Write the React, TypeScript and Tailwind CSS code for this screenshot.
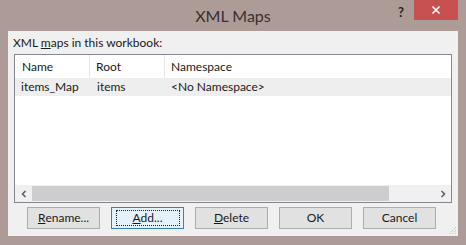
import React from 'react';

const font = { fontFamily: 'Lato, "Noto Sans", Arial, sans-serif' };

function Btn({ children, focused = false }: { children: React.ReactNode; focused?: boolean }) {
  return (
    <div
      className={`flex h-[22px] w-[73px] items-center justify-center border bg-[#e1e1e1] text-[12px] text-[#1a1a1a] ${
        focused ? 'border-[#3c7fb1] bg-[#e5f1fb]' : 'border-[#adadad]'
      }`}
    >
      <div
        className={`flex h-[16px] w-[64px] items-center justify-center ${
          focused ? 'border border-dotted border-[#222]' : ''
        }`}
      >
        {children}
      </div>
    </div>
  );
}

export default function App() {
  return (
    <div className="flex h-[245px] w-[466px] flex-col bg-[#ad9b97]" style={font}>
      {/* title bar */}
      <div className="relative flex h-[31px] items-center justify-center">
        <span className="text-[16px] text-[#3a3030]">XML Maps</span>
        <span className="absolute left-[398px] top-[3px] text-[13px] font-bold text-[#2b2222]">?</span>
        <div className="absolute left-[414px] top-0 flex h-[20px] w-[44px] items-center justify-center bg-[#c75050]">
          <svg width="10" height="10" viewBox="0 0 10 10">
            <path d="M1.5 1.5 L8.5 8.5 M8.5 1.5 L1.5 8.5" stroke="#fff" strokeWidth="1.6" />
          </svg>
        </div>
      </div>

      {/* client */}
      <div className="relative mx-[8px] flex h-[205px] flex-col bg-[#f0f0f0]">
        <div className="h-[23px] pl-[5px] pt-[4px] text-[12px] leading-[16px] text-[#1a1a1a]">
          XML <span className="underline">m</span>aps in this workbook:
        </div>

        {/* list */}
        <div className="ml-[6px] flex h-[149px] w-[438px] flex-col border border-[#828790] bg-white text-[12px] text-[#1a1a1a]">
          <div className="flex h-[23px] items-center">
            <div className="flex h-full w-[75px] items-center border-r border-[#e5e5e5] pl-[7px]">Name</div>
            <div className="flex h-full w-[75px] items-center border-r border-[#e5e5e5] pl-[6px]">Root</div>
            <div className="flex h-full flex-1 items-center pl-[6px]">Namespace</div>
          </div>
          <div className="flex h-[18px] items-center bg-[#eeeeee]">
            <div className="w-[75px] pl-[6px]">items_Map</div>
            <div className="w-[75px] pl-[7px]">items</div>
            <div className="flex-1 pl-[6px]">&lt;No Namespace&gt;</div>
          </div>
          <div className="flex-1" />
          {/* horizontal scrollbar */}
          <div className="flex h-[17px] bg-[#f0f0f0]">
            <div className="flex w-[17px] items-center justify-center">
              <svg width="8" height="8" viewBox="0 0 8 8">
                <path d="M5.5 1 L2.5 4 L5.5 7" stroke="#606060" strokeWidth="1.6" fill="none" />
              </svg>
            </div>
            <div className="my-[1px] w-[357px] bg-[#cdcdcd]" />
            <div className="flex-1" />
            <div className="flex w-[17px] items-center justify-center">
              <svg width="8" height="8" viewBox="0 0 8 8">
                <path d="M2.5 1 L5.5 4 L2.5 7" stroke="#606060" strokeWidth="1.6" fill="none" />
              </svg>
            </div>
          </div>
        </div>

        {/* buttons */}
        <div className="mt-[4px] flex gap-[11px] pl-[19px]">
          <Btn>
            <span className="underline">R</span>ename...
          </Btn>
          <Btn focused>
            <span className="underline">A</span>dd...
          </Btn>
          <Btn>
            <span className="underline">D</span>elete
          </Btn>
          <Btn>OK</Btn>
          <Btn>Cancel</Btn>
        </div>

        <svg className="absolute bottom-[1px] right-[1px]" width="10" height="10" viewBox="0 0 10 10">
          <path d="M9 2 L2 9 M9 5 L5 9 M9 8 L8 9" stroke="#b8b8b8" strokeWidth="1" strokeDasharray="1 1" />
        </svg>
      </div>
    </div>
  );
}
